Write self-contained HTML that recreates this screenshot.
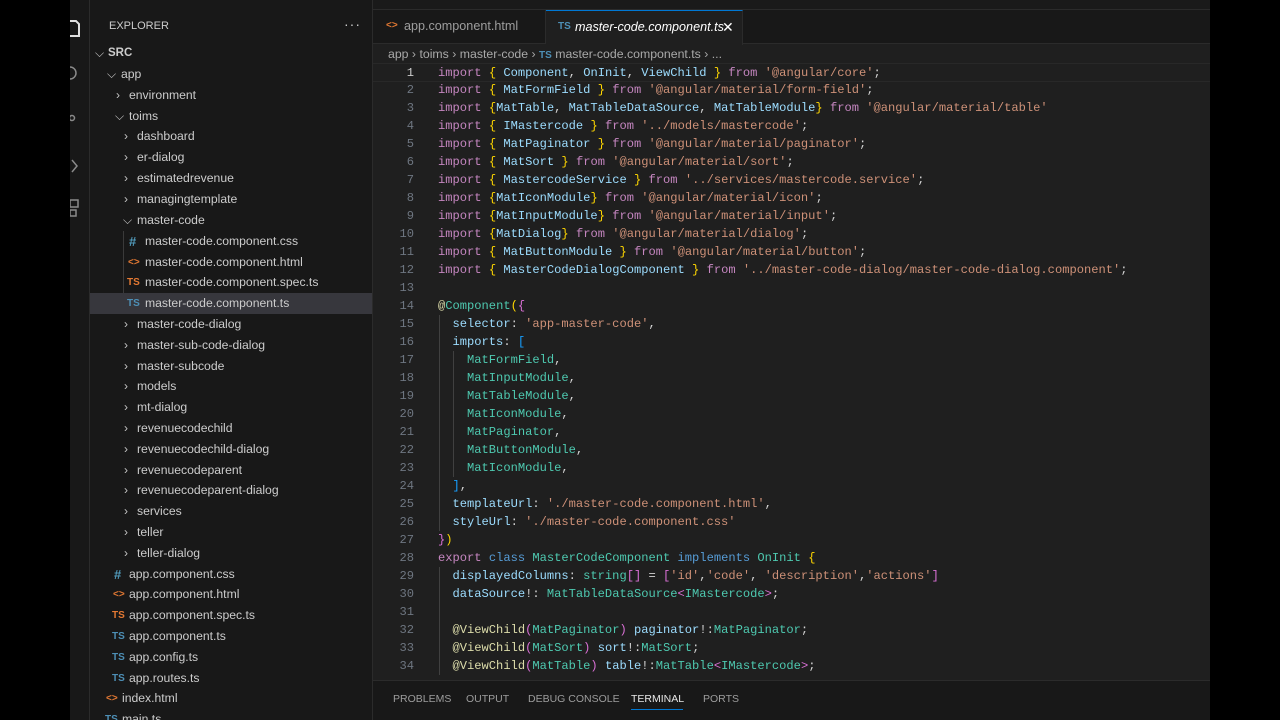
<!DOCTYPE html>
<html><head><meta charset="utf-8"><style>
*{margin:0;padding:0;box-sizing:border-box}
html{width:1280px;height:720px;overflow:hidden}
body{width:1280px;height:720px;background:#000;position:relative;overflow:hidden;font-family:"Liberation Sans",sans-serif;}
#act{position:absolute;left:70px;top:0;width:20px;height:720px;background:#181818;border-right:1px solid #2b2b2b}
#side{position:absolute;left:90px;top:0;width:283px;height:720px;background:#181818;border-right:1px solid #2b2b2b;color:#cccccc;font-size:12.2px;overflow:hidden}
#topstrip{position:absolute;left:70px;top:0;width:1140px;height:10px;background:#1a1a1a;border-bottom:1px solid #2b2b2b}
#ed{position:absolute;left:373px;top:10px;width:837px;height:710px;background:#1f1f1f;overflow:hidden}
.row{position:absolute;left:0;width:283px;height:21px;line-height:21px;white-space:nowrap}
.chev{position:absolute;color:#c5c5c5;font-size:12px}
.ic{position:absolute;font-weight:bold;font-size:10px}
.ts{color:#4d8fb6}.tsr{color:#e37933}.css{color:#519aba;font-size:13px}.htm{color:#e37933}
#tabs{position:absolute;left:0;top:0;width:837px;height:34px;background:#181818;border-bottom:1px solid #2b2b2b}
.tab{position:absolute;top:0;height:34px;line-height:32px;font-size:12.6px}
#crumb{position:absolute;left:15px;top:34px;height:20px;line-height:20px;font-size:12.3px;color:#a9a9a9}
#code{position:absolute;left:0;top:53px;width:837px;font-family:"Liberation Mono",monospace;font-size:12.1px;color:#d4d4d4}
.ln{position:absolute;left:0;height:18px;line-height:18px;white-space:pre;width:837px}
.n{position:absolute;left:0;width:41px;text-align:right;color:#6e7681}
.t{position:absolute;left:65px}
.k{color:#c586c0}.y{color:#ffd700}.v{color:#9cdcfe}.s{color:#ce9178}.c{color:#4ec9b0}.b{color:#569cd6}.f{color:#dcdcaa}.p{color:#da70d6}.q{color:#179fff}.w{color:#d4d4d4}
#panel{position:absolute;left:0;top:670px;width:837px;height:40px;background:#181818;border-top:1px solid #2b2b2b;font-size:10.5px;color:#9d9d9d}
#panel span{position:absolute;top:12px}
</style></head><body>
<div id="topstrip"></div>
<div id="act">
<svg width="20" height="230" style="position:absolute;left:0;top:0"><path d="M0 21h6l3 3v12H0" fill="none" stroke="#e0e0e0" stroke-width="2"/><circle cx="0" cy="73" r="6" fill="none" stroke="#8a8a8a" stroke-width="1.5"/><circle cx="2" cy="118" r="2.5" fill="none" stroke="#8a8a8a" stroke-width="1.5"/><path d="M2 160l5 6-5 6" fill="none" stroke="#8a8a8a" stroke-width="1.5"/><rect x="0" y="200" width="8" height="7" fill="none" stroke="#8a8a8a" stroke-width="1.5"/><rect x="0" y="210" width="6" height="6" fill="none" stroke="#8a8a8a" stroke-width="1.5"/></svg>
</div>
<div id="side">
<div style="position:absolute;left:19px;top:20px;font-size:11px;color:#cccccc">EXPLORER</div>
<div style="position:absolute;left:254px;top:16px;font-size:14px;color:#ccc;letter-spacing:1px">···</div>
<div class="row" style="top:43px"><span class="chev" style="left:5px">⌵</span><span style="position:absolute;left:18px;font-weight:bold;font-size:11.5px">SRC</span></div>
<div class="row" style="top:64px"><span class="chev" style="left:17px">⌵</span><span style="position:absolute;left:31px">app</span></div>
<div class="row" style="top:85px"><span class="chev" style="left:26px">›</span><span style="position:absolute;left:39px">environment</span></div>
<div class="row" style="top:106px"><span class="chev" style="left:25px">⌵</span><span style="position:absolute;left:39px">toims</span></div>
<div class="row" style="top:126px"><span class="chev" style="left:34px">›</span><span style="position:absolute;left:47px">dashboard</span></div>
<div class="row" style="top:147px"><span class="chev" style="left:34px">›</span><span style="position:absolute;left:47px">er-dialog</span></div>
<div class="row" style="top:168px"><span class="chev" style="left:34px">›</span><span style="position:absolute;left:47px">estimatedrevenue</span></div>
<div class="row" style="top:189px"><span class="chev" style="left:34px">›</span><span style="position:absolute;left:47px">managingtemplate</span></div>
<div class="row" style="top:210px"><span class="chev" style="left:33px">⌵</span><span style="position:absolute;left:47px">master-code</span></div>
<div style="position:absolute;left:33px;top:231px;width:1px;height:83px;background:#3a3a3a"></div>
<div class="row" style="top:231px"><span class="ic css" style="left:39px">#</span><span style="position:absolute;left:55px">master-code.component.css</span></div>
<div class="row" style="top:252px"><span class="ic htm" style="left:38px">&lt;&gt;</span><span style="position:absolute;left:55px">master-code.component.html</span></div>
<div class="row" style="top:272px"><span class="ic tsr" style="left:37px">TS</span><span style="position:absolute;left:55px">master-code.component.spec.ts</span></div>
<div class="row" style="top:293px;background:#37373d"><span class="ic ts" style="left:37px">TS</span><span style="position:absolute;left:55px">master-code.component.ts</span></div>
<div class="row" style="top:314px"><span class="chev" style="left:34px">›</span><span style="position:absolute;left:47px">master-code-dialog</span></div>
<div class="row" style="top:335px"><span class="chev" style="left:34px">›</span><span style="position:absolute;left:47px">master-sub-code-dialog</span></div>
<div class="row" style="top:356px"><span class="chev" style="left:34px">›</span><span style="position:absolute;left:47px">master-subcode</span></div>
<div class="row" style="top:376px"><span class="chev" style="left:34px">›</span><span style="position:absolute;left:47px">models</span></div>
<div class="row" style="top:397px"><span class="chev" style="left:34px">›</span><span style="position:absolute;left:47px">mt-dialog</span></div>
<div class="row" style="top:418px"><span class="chev" style="left:34px">›</span><span style="position:absolute;left:47px">revenuecodechild</span></div>
<div class="row" style="top:439px"><span class="chev" style="left:34px">›</span><span style="position:absolute;left:47px">revenuecodechild-dialog</span></div>
<div class="row" style="top:460px"><span class="chev" style="left:34px">›</span><span style="position:absolute;left:47px">revenuecodeparent</span></div>
<div class="row" style="top:480px"><span class="chev" style="left:34px">›</span><span style="position:absolute;left:47px">revenuecodeparent-dialog</span></div>
<div class="row" style="top:501px"><span class="chev" style="left:34px">›</span><span style="position:absolute;left:47px">services</span></div>
<div class="row" style="top:522px"><span class="chev" style="left:34px">›</span><span style="position:absolute;left:47px">teller</span></div>
<div class="row" style="top:543px"><span class="chev" style="left:34px">›</span><span style="position:absolute;left:47px">teller-dialog</span></div>
<div class="row" style="top:564px"><span class="ic css" style="left:24px">#</span><span style="position:absolute;left:39px">app.component.css</span></div>
<div class="row" style="top:584px"><span class="ic htm" style="left:23px">&lt;&gt;</span><span style="position:absolute;left:39px">app.component.html</span></div>
<div class="row" style="top:605px"><span class="ic tsr" style="left:22px">TS</span><span style="position:absolute;left:39px">app.component.spec.ts</span></div>
<div class="row" style="top:626px"><span class="ic ts" style="left:22px">TS</span><span style="position:absolute;left:39px">app.component.ts</span></div>
<div class="row" style="top:647px"><span class="ic ts" style="left:22px">TS</span><span style="position:absolute;left:39px">app.config.ts</span></div>
<div class="row" style="top:668px"><span class="ic ts" style="left:22px">TS</span><span style="position:absolute;left:39px">app.routes.ts</span></div>
<div class="row" style="top:688px"><span class="ic htm" style="left:16px">&lt;&gt;</span><span style="position:absolute;left:32px">index.html</span></div>
<div class="row" style="top:709px"><span class="ic ts" style="left:15px">TS</span><span style="position:absolute;left:32px">main.ts</span></div>
</div>
<div id="ed">
<div id="tabs">
<div class="tab" style="left:0;width:173px;border-right:1px solid #2b2b2b;color:#9d9d9d"><span class="htm" style="position:absolute;left:13px;font-size:10px;font-weight:bold">&lt;&gt;</span><span style="position:absolute;left:31px">app.component.html</span></div>
<div class="tab" style="left:173px;width:197px;background:#1f1f1f;border-top:1px solid #0078d4;border-right:1px solid #2b2b2b;height:35px;color:#fff"><span class="ts" style="position:absolute;left:12px;font-size:10px;font-weight:bold">TS</span><span style="position:absolute;left:29px;font-style:italic">master-code.component.ts</span><span style="position:absolute;left:176px;font-size:14px">✕</span></div>
</div>
<div id="crumb">app › toims › master-code › <span class="ts" style="font-size:10px;font-weight:bold">TS</span> master-code.component.ts › ...</div>
<div id="code">
<div class="ln" style="top:0;border-top:1px solid #282828;border-bottom:1px solid #282828;height:19px"><span class="n" style="color:#ccc">1</span><span class="t"><span class="k">import</span> <span class="y">{</span> <span class="v">Component</span>, <span class="v">OnInit</span>, <span class="v">ViewChild</span> <span class="y">}</span> <span class="k">from</span> <span class="s">'@angular/core'</span>;</span></div>
<div class="ln" style="top:18px"><span class="n">2</span><span class="t"><span class="k">import</span> <span class="y">{</span> <span class="v">MatFormField</span> <span class="y">}</span> <span class="k">from</span> <span class="s">'@angular/material/form-field'</span>;</span></div>
<div class="ln" style="top:36px"><span class="n">3</span><span class="t"><span class="k">import</span> <span class="y">{</span><span class="v">MatTable</span>, <span class="v">MatTableDataSource</span>, <span class="v">MatTableModule</span><span class="y">}</span> <span class="k">from</span> <span class="s">'@angular/material/table'</span></span></div>
<div class="ln" style="top:54px"><span class="n">4</span><span class="t"><span class="k">import</span> <span class="y">{</span> <span class="v">IMastercode</span> <span class="y">}</span> <span class="k">from</span> <span class="s">'../models/mastercode'</span>;</span></div>
<div class="ln" style="top:72px"><span class="n">5</span><span class="t"><span class="k">import</span> <span class="y">{</span> <span class="v">MatPaginator</span> <span class="y">}</span> <span class="k">from</span> <span class="s">'@angular/material/paginator'</span>;</span></div>
<div class="ln" style="top:90px"><span class="n">6</span><span class="t"><span class="k">import</span> <span class="y">{</span> <span class="v">MatSort</span> <span class="y">}</span> <span class="k">from</span> <span class="s">'@angular/material/sort'</span>;</span></div>
<div class="ln" style="top:108px"><span class="n">7</span><span class="t"><span class="k">import</span> <span class="y">{</span> <span class="v">MastercodeService</span> <span class="y">}</span> <span class="k">from</span> <span class="s">'../services/mastercode.service'</span>;</span></div>
<div class="ln" style="top:126px"><span class="n">8</span><span class="t"><span class="k">import</span> <span class="y">{</span><span class="v">MatIconModule</span><span class="y">}</span> <span class="k">from</span> <span class="s">'@angular/material/icon'</span>;</span></div>
<div class="ln" style="top:144px"><span class="n">9</span><span class="t"><span class="k">import</span> <span class="y">{</span><span class="v">MatInputModule</span><span class="y">}</span> <span class="k">from</span> <span class="s">'@angular/material/input'</span>;</span></div>
<div class="ln" style="top:162px"><span class="n">10</span><span class="t"><span class="k">import</span> <span class="y">{</span><span class="v">MatDialog</span><span class="y">}</span> <span class="k">from</span> <span class="s">'@angular/material/dialog'</span>;</span></div>
<div class="ln" style="top:180px"><span class="n">11</span><span class="t"><span class="k">import</span> <span class="y">{</span> <span class="v">MatButtonModule</span> <span class="y">}</span> <span class="k">from</span> <span class="s">'@angular/material/button'</span>;</span></div>
<div class="ln" style="top:198px"><span class="n">12</span><span class="t"><span class="k">import</span> <span class="y">{</span> <span class="v">MasterCodeDialogComponent</span> <span class="y">}</span> <span class="k">from</span> <span class="s">'../master-code-dialog/master-code-dialog.component'</span>;</span></div>
<div class="ln" style="top:216px"><span class="n">13</span></div>
<div class="ln" style="top:234px"><span class="n">14</span><span class="t"><span class="f">@</span><span class="c">Component</span><span class="y">(</span><span class="p">{</span></span></div>
<div class="ln" style="top:252px"><span class="n">15</span><span class="t">  <span class="v">selector</span>: <span class="s">'app-master-code'</span>,</span></div>
<div class="ln" style="top:270px"><span class="n">16</span><span class="t">  <span class="v">imports</span>: <span class="q">[</span></span></div>
<div class="ln" style="top:288px"><span class="n">17</span><span class="t">    <span class="c">MatFormField</span>,</span></div>
<div class="ln" style="top:306px"><span class="n">18</span><span class="t">    <span class="c">MatInputModule</span>,</span></div>
<div class="ln" style="top:324px"><span class="n">19</span><span class="t">    <span class="c">MatTableModule</span>,</span></div>
<div class="ln" style="top:342px"><span class="n">20</span><span class="t">    <span class="c">MatIconModule</span>,</span></div>
<div class="ln" style="top:360px"><span class="n">21</span><span class="t">    <span class="c">MatPaginator</span>,</span></div>
<div class="ln" style="top:378px"><span class="n">22</span><span class="t">    <span class="c">MatButtonModule</span>,</span></div>
<div class="ln" style="top:396px"><span class="n">23</span><span class="t">    <span class="c">MatIconModule</span>,</span></div>
<div class="ln" style="top:414px"><span class="n">24</span><span class="t">  <span class="q">]</span>,</span></div>
<div class="ln" style="top:432px"><span class="n">25</span><span class="t">  <span class="v">templateUrl</span>: <span class="s">'./master-code.component.html'</span>,</span></div>
<div class="ln" style="top:450px"><span class="n">26</span><span class="t">  <span class="v">styleUrl</span>: <span class="s">'./master-code.component.css'</span></span></div>
<div class="ln" style="top:468px"><span class="n">27</span><span class="t"><span class="p">}</span><span class="y">)</span></span></div>
<div class="ln" style="top:486px"><span class="n">28</span><span class="t"><span class="k">export</span> <span class="b">class</span> <span class="c">MasterCodeComponent</span> <span class="b">implements</span> <span class="c">OnInit</span> <span class="y">{</span></span></div>
<div class="ln" style="top:504px"><span class="n">29</span><span class="t">  <span class="v">displayedColumns</span>: <span class="c">string</span><span class="p">[]</span> = <span class="p">[</span><span class="s">'id'</span>,<span class="s">'code'</span>, <span class="s">'description'</span>,<span class="s">'actions'</span><span class="p">]</span></span></div>
<div class="ln" style="top:522px"><span class="n">30</span><span class="t">  <span class="v">dataSource</span>!: <span class="c">MatTableDataSource</span><span class="p">&lt;</span><span class="c">IMastercode</span><span class="p">&gt;</span>;</span></div>
<div class="ln" style="top:540px"><span class="n">31</span></div>
<div class="ln" style="top:558px"><span class="n">32</span><span class="t">  <span class="f">@ViewChild</span><span class="p">(</span><span class="c">MatPaginator</span><span class="p">)</span> <span class="v">paginator</span>!:<span class="c">MatPaginator</span>;</span></div>
<div class="ln" style="top:576px"><span class="n">33</span><span class="t">  <span class="f">@ViewChild</span><span class="p">(</span><span class="c">MatSort</span><span class="p">)</span> <span class="v">sort</span>!:<span class="c">MatSort</span>;</span></div>
<div class="ln" style="top:594px"><span class="n">34</span><span class="t">  <span class="f">@ViewChild</span><span class="p">(</span><span class="c">MatTable</span><span class="p">)</span> <span class="v">table</span>!:<span class="c">MatTable</span><span class="p">&lt;</span><span class="c">IMastercode</span><span class="p">&gt;</span>;</span></div>
<div style="position:absolute;left:66px;top:252px;width:1px;height:216px;background:#404040"></div>
<div style="position:absolute;left:80px;top:288px;width:1px;height:126px;background:#404040"></div>
<div style="position:absolute;left:66px;top:504px;width:1px;height:108px;background:#404040"></div>
</div>
<div id="panel">
<span style="left:20px">PROBLEMS</span><span style="left:93px">OUTPUT</span><span style="left:155px">DEBUG CONSOLE</span><span style="left:258px;color:#e7e7e7">TERMINAL</span><span style="left:330px">PORTS</span>
<div style="position:absolute;left:258px;top:28px;width:52px;height:1px;background:#0078d4"></div>
</div>
</div>
</body></html>
